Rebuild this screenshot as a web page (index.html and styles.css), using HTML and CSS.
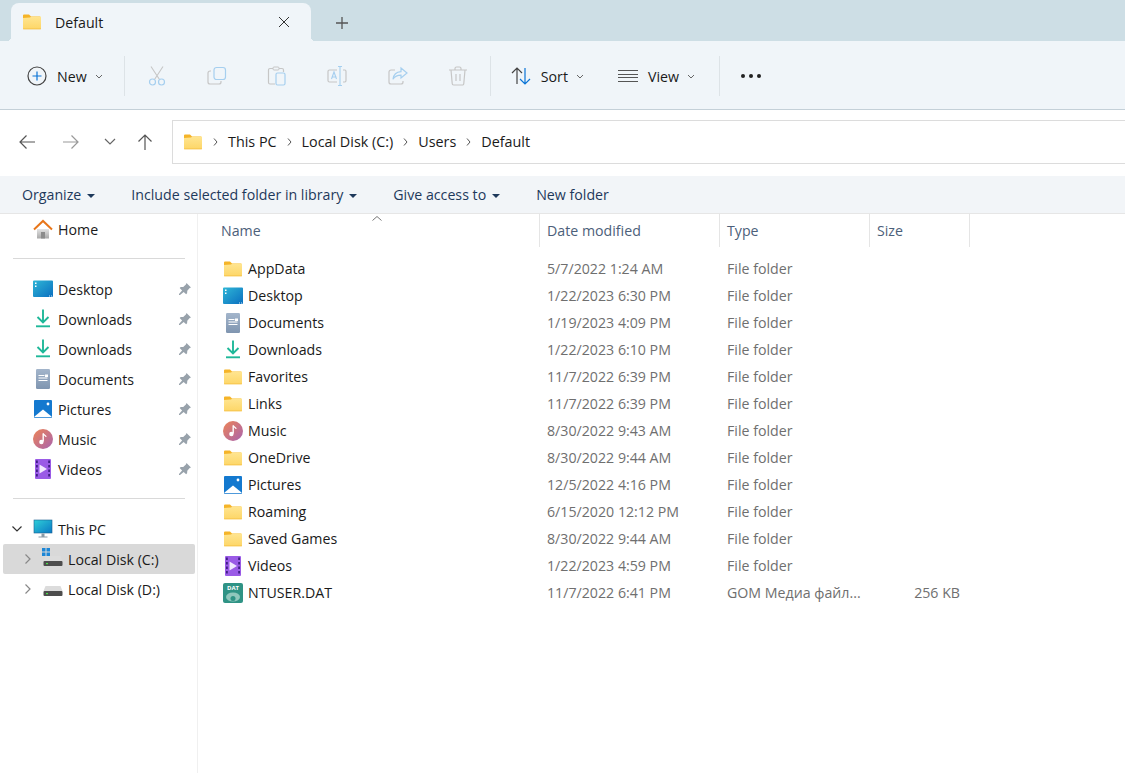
FILE: index.html
```html
<!DOCTYPE html>
<html lang="en">
<head>
    <meta charset="UTF-8">
    <meta name="viewport" content="width=device-width, initial-scale=1.0">
    <title>Default - File Explorer</title>
    <link rel="stylesheet" href="styles.css">
</head>
<body>

    <!-- icon sprites -->
    <svg class="sprites" width="0" height="0">
        <defs>
            <linearGradient id="folderFill" x1="0" y1="0" x2="0" y2="1">
                <stop offset="0" stop-color="#ffe591"/>
                <stop offset="1" stop-color="#fdd667"/>
            </linearGradient>
            <linearGradient id="deskFill" x1="0" y1="0" x2="1" y2="1">
                <stop offset="0" stop-color="#2fb6d6"/>
                <stop offset="1" stop-color="#0a6fc0"/>
            </linearGradient>
            <linearGradient id="docFill" x1="0" y1="0" x2="0" y2="1">
                <stop offset="0" stop-color="#a3b5cb"/>
                <stop offset="1" stop-color="#7f95b0"/>
            </linearGradient>
            <linearGradient id="musicFill" x1="0" y1="0" x2="1" y2="1">
                <stop offset="0" stop-color="#ee8455"/>
                <stop offset="1" stop-color="#a864b0"/>
            </linearGradient>
            <linearGradient id="homeFill" x1="0" y1="0" x2="0" y2="1">
                <stop offset="0" stop-color="#e4e4e4"/>
                <stop offset="1" stop-color="#a8a8a8"/>
            </linearGradient>
            <linearGradient id="pcFill" x1="0" y1="0" x2="1" y2="1">
                <stop offset="0" stop-color="#2fcfd8"/>
                <stop offset="1" stop-color="#0a78c4"/>
            </linearGradient>
            <symbol id="folder" viewBox="0 0 20 20">
                <path d="M1 3.500a1 1 0 0 1 1-1h5l2 2h9v3H1z" fill="#f5b428"/>
                <path d="M1 6l7-.5 1.500-1H19v12a.7.7 0 0 1-.7.7H1.700a.7.7 0 0 1-.7-.7z" fill="url(#folderFill)"/>
                <path d="M1 16.600h18v.6H1z" fill="#f2b93a"/>
            </symbol>
            <symbol id="desktop" viewBox="0 0 20 20">
                <path d="M0 2.500a1 1 0 0 1 1-1h18a1 1 0 0 1 1 1V17a1 1 0 0 1-1 1H1a1 1 0 0 1-1-1z" fill="url(#deskFill)"/>
                <path d="M2 3.500h1.500V5H2zM2 6.500h1.500V8H2z" fill="#fff"/>
                <path d="M16 16.500h1v1h-1zM18 16.500h1v1h-1z" fill="#cfe8f5"/>
            </symbol>
            <symbol id="download" viewBox="0 0 20 20">
                <path d="M10 .5v13M4.500 8L10 13.500 15.500 8" fill="none" stroke="#1fb899" stroke-width="1.900"/>
                <path d="M3 17.300h14" stroke="#1fb899" stroke-width="1.900"/>
            </symbol>
            <symbol id="documents" viewBox="0 0 20 20">
                <rect x="3" y="0" width="14" height="20" rx="1.200" fill="url(#docFill)"/>
                <path d="M5.500 6.500h6M5.500 9h9M5.500 11.500h9" stroke="#fff" stroke-width="1"/>
                <rect x="12" y="5.500" width="3" height="2.500" fill="#fff"/>
            </symbol>
            <symbol id="pictures" viewBox="0 0 20 20">
                <rect x="1" y="1" width="18" height="18" rx="1" fill="#1479cf"/>
                <path d="M1.500 17.500L10 10.500l8.500 7v.8h-17z" fill="#fff"/>
                <circle cx="15" cy="5" r="1.400" fill="#fff"/>
            </symbol>
            <symbol id="music" viewBox="0 0 20 20">
                <circle cx="10" cy="10" r="10" fill="url(#musicFill)"/>
                <path d="M10.200 4.500v8" stroke="#fff" stroke-width="1.400"/>
                <circle cx="8.400" cy="13" r="2.200" fill="#fff"/>
                <path d="M10.200 4.500c.5 1.800 2.500 1.800 3 3.400" fill="none" stroke="#fff" stroke-width="1.200"/>
            </symbol>
            <symbol id="videos" viewBox="0 0 20 20">
                <rect x="2" y="0" width="16" height="20" rx="1" fill="#9a5be6"/>
                <path d="M6.500 5.500v9l7.500-4.500z" fill="#f1e8ff"/>
                <path d="M3 1.500h1.800v2.400H3zM3 6h1.800v2.400H3zM3 10.500h1.800v2.400H3zM3 15h1.800v2.400H3zM15.200 1.500H17v2.400h-1.800zM15.200 6H17v2.400h-1.800zM15.200 10.500H17v2.400h-1.800zM15.200 15H17v2.400h-1.800z" fill="#3f1f85"/>
            </symbol>
            <symbol id="pin" viewBox="0 0 14 14">
                <path d="M8.500 1l4.500 4.500-1.300.6-2.400 2.700-.2 2.500-1 1-2.400-2.400L2 13l-1 0 0-1 3.100-3.500L1.700 6.100l1-1 2.500-.2 2.700-2.400z" fill="#98a2ab"/>
            </symbol>
            <symbol id="disk" viewBox="0 0 20 20">
                <path d="M2.500 7h15l2 5H.5z" fill="#dcdcdc"/>
                <rect x="0.500" y="12" width="19" height="5" rx="1" fill="#4d4d4d"/>
                <rect x="3" y="14" width="2" height="1.200" fill="#4be04b"/>
            </symbol>
        </defs>
    </svg>

    <div class="tab-strip">
        <div class="tab">
            <svg class="ico"><use href="#folder"/></svg>
            <span class="tab-title">Default</span>
            <svg class="tab-close" viewBox="0 0 12 12"><path d="M1 1l10 10M11 1L1 11" stroke="#333" fill="none"/></svg>
        </div>
        <svg class="tab-add" viewBox="0 0 12 12"><path d="M6 0v12M0 6h12" stroke="#555" stroke-width="1.300" fill="none"/></svg>
    </div>

    <div class="toolbar">
        <div class="tool tool-new">
            <svg class="tool-ico" viewBox="0 0 20 20">
                <circle cx="10" cy="10" r="9" fill="none" stroke="#444" stroke-width="1.200"/>
                <path d="M10 5.500v9M5.500 10h9" stroke="#0a74d6" stroke-width="1.200"/>
            </svg>
            <span>New</span>
            <svg class="chev" viewBox="0 0 8 5"><path d="M1 1l3 3 3-3" fill="none" stroke="#666"/></svg>
        </div>
        <div class="tool-sep sep-a"></div>
        <div class="tool-icon">
            <svg class="tool-ico" viewBox="0 0 20 20">
                <path d="M4 .5l8.500 13M16 .5L7.500 13.500" fill="none" stroke="#c6c6c6" stroke-width="1.100"/>
                <circle cx="5.500" cy="16" r="3" fill="none" stroke="#a6cfef" stroke-width="1.200"/>
                <circle cx="14.500" cy="16" r="3" fill="none" stroke="#a6cfef" stroke-width="1.200"/>
            </svg>
        </div>
        <div class="tool-icon">
            <svg class="tool-ico" viewBox="0 0 20 20">
                <path d="M4 5H3a2 2 0 0 0-2 2v9a2 2 0 0 0 2 2h9a2 2 0 0 0 2-2v-1" fill="none" stroke="#c6c6c6" stroke-width="1.200"/>
                <rect x="7" y="1.500" width="11.500" height="12" rx="2.500" fill="none" stroke="#a6cfef" stroke-width="1.200"/>
            </svg>
        </div>
        <div class="tool-icon">
            <svg class="tool-ico" viewBox="0 0 20 20">
                <path d="M8 18H3a1.500 1.500 0 0 1-1.500-1.500V4A1.500 1.500 0 0 1 3 2.500h12A1.500 1.500 0 0 1 16.500 4v2" fill="none" stroke="#c6c6c6" stroke-width="1.200"/>
                <rect x="6" y="1" width="6" height="3" rx="1" fill="#f0f5f9" stroke="#c6c6c6"/>
                <rect x="9" y="7" width="9" height="12" rx="1.500" fill="none" stroke="#a6cfef" stroke-width="1.200"/>
            </svg>
        </div>
        <div class="tool-icon">
            <svg class="tool-ico" viewBox="0 0 20 20">
                <path d="M10 4H2.500A1.500 1.500 0 0 0 1 5.500v9A1.500 1.500 0 0 0 2.500 16H10M16 4h2a1.500 1.500 0 0 1 1 1.500v9a1.500 1.500 0 0 1-1 1.500h-2" fill="none" stroke="#c6c6c6" stroke-width="1.200"/>
                <path d="M4.500 13l2.500-7 2.500 7M5.500 11h4M13 .5v19M11 .5h4M11 19.500h4" fill="none" stroke="#a6cfef" stroke-width="1.100"/>
            </svg>
        </div>
        <div class="tool-icon">
            <svg class="tool-ico" viewBox="0 0 20 20">
                <path d="M7 4H3a2 2 0 0 0-2 2v10a2 2 0 0 0 2 2h10a2 2 0 0 0 2-2v-1" fill="none" stroke="#c6c6c6" stroke-width="1.200"/>
                <path d="M13 2l6 5-6 5V9.200c-3 0-6 1-8 4 .5-4 3.500-7.200 8-7.500z" fill="none" stroke="#a6cfef" stroke-width="1.200"/>
            </svg>
        </div>
        <div class="tool-icon">
            <svg class="tool-ico" viewBox="0 0 20 20">
                <path d="M1 4h18M7 4V2.500A1.500 1.500 0 0 1 8.500 1h3A1.500 1.500 0 0 1 13 2.500V4M3 4l1.200 13.500A1.500 1.500 0 0 0 5.700 19h8.600a1.500 1.500 0 0 0 1.500-1.500L17 4M8 8v7M12 8v7" fill="none" stroke="#c6c6c6" stroke-width="1.200"/>
            </svg>
        </div>
        <div class="tool-sep sep-b"></div>
        <div class="tool tool-sort">
            <svg class="tool-ico" viewBox="0 0 20 20">
                <path d="M6 18V2M1 7l5-5 5 5" fill="none" stroke="#444" stroke-width="1.200"/>
                <path d="M14 2v16M9 13l5 5 5-5" fill="none" stroke="#0a74d6" stroke-width="1.200"/>
            </svg>
            <span>Sort</span>
            <svg class="chev" viewBox="0 0 8 5"><path d="M1 1l3 3 3-3" fill="none" stroke="#666"/></svg>
        </div>
        <div class="tool tool-view">
            <svg class="tool-ico" viewBox="0 0 20 20">
                <path d="M0 4.500h20M0 8.500h20M0 11.500h20M0 15.500h20" stroke="#555" stroke-width="1.200"/>
            </svg>
            <span>View</span>
            <svg class="chev" viewBox="0 0 8 5"><path d="M1 1l3 3 3-3" fill="none" stroke="#666"/></svg>
        </div>
        <div class="tool-sep sep-c"></div>
        <div class="more"><i></i><i></i><i></i></div>
    </div>

    <div class="address-row">
        <div class="nav-buttons">
            <svg class="nav-ico" viewBox="0 0 16 16"><path d="M16 8H1M7.500 1.500L1 8l6.500 6.500" fill="none" stroke="#555" stroke-width="1.200"/></svg>
            <svg class="nav-ico nav-off" viewBox="0 0 16 16"><path d="M0 8h15M8.500 1.500L15 8l-6.500 6.500" fill="none" stroke="#999" stroke-width="1.200"/></svg>
            <svg class="nav-chev" viewBox="0 0 12 7"><path d="M1 1l5 5 5-5" fill="none" stroke="#666" stroke-width="1.200"/></svg>
            <svg class="nav-ico" viewBox="0 0 16 16"><path d="M8 16V1M1.500 7.500L8 1l6.500 6.500" fill="none" stroke="#555" stroke-width="1.200"/></svg>
        </div>
        <div class="address-box">
            <svg class="ico crumb-folder"><use href="#folder"/></svg>
            <svg class="crumb-sep" viewBox="0 0 5 8"><path d="M1 .5L4 4 1 7.500" fill="none" stroke="#555"/></svg>
            <span>This PC</span>
            <svg class="crumb-sep" viewBox="0 0 5 8"><path d="M1 .5L4 4 1 7.500" fill="none" stroke="#555"/></svg>
            <span>Local Disk (C:)</span>
            <svg class="crumb-sep" viewBox="0 0 5 8"><path d="M1 .5L4 4 1 7.500" fill="none" stroke="#555"/></svg>
            <span>Users</span>
            <svg class="crumb-sep" viewBox="0 0 5 8"><path d="M1 .5L4 4 1 7.500" fill="none" stroke="#555"/></svg>
            <span>Default</span>
        </div>
    </div>

    <div class="command-bar">
        <span class="cmd cmd-arrow">Organize</span>
        <span class="cmd cmd-arrow">Include selected folder in library</span>
        <span class="cmd cmd-arrow">Give access to</span>
        <span class="cmd">New folder</span>
    </div>

    <div class="content">
        <nav class="sidebar">
            <div class="side-item">
                <svg class="ico" viewBox="0 0 20 20">
                    <path d="M4 10h12v9.500H4z" fill="url(#homeFill)"/>
                    <path d="M8 13h4v6.500H8z" fill="#8c8c8c"/>
                    <path d="M1 10.500L10 2l9 8.500" fill="none" stroke="#e8761a" stroke-width="2"/>
                </svg>
                <span>Home</span>
            </div>
            <hr class="side-line">
            <div class="side-item"><svg class="ico"><use href="#desktop"/></svg><span>Desktop</span><svg class="pin"><use href="#pin"/></svg></div>
            <div class="side-item"><svg class="ico"><use href="#download"/></svg><span>Downloads</span><svg class="pin"><use href="#pin"/></svg></div>
            <div class="side-item"><svg class="ico"><use href="#download"/></svg><span>Downloads</span><svg class="pin"><use href="#pin"/></svg></div>
            <div class="side-item"><svg class="ico"><use href="#documents"/></svg><span>Documents</span><svg class="pin"><use href="#pin"/></svg></div>
            <div class="side-item"><svg class="ico"><use href="#pictures"/></svg><span>Pictures</span><svg class="pin"><use href="#pin"/></svg></div>
            <div class="side-item"><svg class="ico"><use href="#music"/></svg><span>Music</span><svg class="pin"><use href="#pin"/></svg></div>
            <div class="side-item"><svg class="ico"><use href="#videos"/></svg><span>Videos</span><svg class="pin"><use href="#pin"/></svg></div>
            <hr class="side-line">
            <div class="side-item side-pc">
                <svg class="tree-arrow" viewBox="0 0 10 6"><path d="M.5.5L5 5 9.500.5" fill="none" stroke="#333" stroke-width="1.200"/></svg>
                <svg class="ico" viewBox="0 0 20 20">
                    <rect x="1" y="1" width="18" height="13" fill="url(#pcFill)" stroke="#1a5f8f" stroke-width=".6"/>
                    <path d="M8.500 14.500h3v3h-3zM5.500 17.500h9v1h-9z" fill="#8a9aa6"/>
                </svg>
                <span>This PC</span>
            </div>
            <div class="side-item side-disk selected">
                <svg class="tree-arrow side-arrow" viewBox="0 0 6 10"><path d="M.5.5L5 5 .5 9.500" fill="none" stroke="#888" stroke-width="1.200"/></svg>
                <span class="disk-wrap">
                    <svg class="ico"><use href="#disk"/></svg>
                    <svg class="win-logo" viewBox="0 0 8 8"><path d="M0 0h3.500v3.500H0zM4.500 0H8v3.500H4.500zM0 4.500h3.500V8H0zM4.500 4.500H8V8H4.500z" fill="#1c86d6"/></svg>
                </span>
                <span>Local Disk (C:)</span>
            </div>
            <div class="side-item side-disk">
                <svg class="tree-arrow side-arrow" viewBox="0 0 6 10"><path d="M.5.5L5 5 .5 9.500" fill="none" stroke="#888" stroke-width="1.200"/></svg>
                <span class="disk-wrap"><svg class="ico"><use href="#disk"/></svg></span>
                <span>Local Disk (D:)</span>
            </div>
        </nav>

        <main class="files">
            <div class="file-head">
                <span class="col-name">Name</span>
                <span class="col">Date modified</span>
                <span class="col">Type</span>
                <span class="col col-last">Size</span>
                <svg class="sort-caret" viewBox="0 0 10 5"><path d="M.5 4.500L5 .5l4.500 4" fill="none" stroke="#777"/></svg>
            </div>
            <div class="file-list">
                <div class="file-row"><span class="name"><svg class="ico"><use href="#folder"/></svg>AppData</span><span class="meta">5/7/2022 1:24 AM</span><span class="meta">File folder</span><span class="meta"></span></div>
                <div class="file-row"><span class="name"><svg class="ico"><use href="#desktop"/></svg>Desktop</span><span class="meta">1/22/2023 6:30 PM</span><span class="meta">File folder</span><span class="meta"></span></div>
                <div class="file-row"><span class="name"><svg class="ico"><use href="#documents"/></svg>Documents</span><span class="meta">1/19/2023 4:09 PM</span><span class="meta">File folder</span><span class="meta"></span></div>
                <div class="file-row"><span class="name"><svg class="ico"><use href="#download"/></svg>Downloads</span><span class="meta">1/22/2023 6:10 PM</span><span class="meta">File folder</span><span class="meta"></span></div>
                <div class="file-row"><span class="name"><svg class="ico"><use href="#folder"/></svg>Favorites</span><span class="meta">11/7/2022 6:39 PM</span><span class="meta">File folder</span><span class="meta"></span></div>
                <div class="file-row"><span class="name"><svg class="ico"><use href="#folder"/></svg>Links</span><span class="meta">11/7/2022 6:39 PM</span><span class="meta">File folder</span><span class="meta"></span></div>
                <div class="file-row"><span class="name"><svg class="ico"><use href="#music"/></svg>Music</span><span class="meta">8/30/2022 9:43 AM</span><span class="meta">File folder</span><span class="meta"></span></div>
                <div class="file-row"><span class="name"><svg class="ico"><use href="#folder"/></svg>OneDrive</span><span class="meta">8/30/2022 9:44 AM</span><span class="meta">File folder</span><span class="meta"></span></div>
                <div class="file-row"><span class="name"><svg class="ico"><use href="#pictures"/></svg>Pictures</span><span class="meta">12/5/2022 4:16 PM</span><span class="meta">File folder</span><span class="meta"></span></div>
                <div class="file-row"><span class="name"><svg class="ico"><use href="#folder"/></svg>Roaming</span><span class="meta">6/15/2020 12:12 PM</span><span class="meta">File folder</span><span class="meta"></span></div>
                <div class="file-row"><span class="name"><svg class="ico"><use href="#folder"/></svg>Saved Games</span><span class="meta">8/30/2022 9:44 AM</span><span class="meta">File folder</span><span class="meta"></span></div>
                <div class="file-row"><span class="name"><svg class="ico"><use href="#videos"/></svg>Videos</span><span class="meta">1/22/2023 4:59 PM</span><span class="meta">File folder</span><span class="meta"></span></div>
                <div class="file-row">
                    <span class="name">
                        <svg class="ico" viewBox="0 0 20 20">
                            <rect x="0" y="0" width="20" height="20" rx="2" fill="#2f9385"/>
                            <text x="10" y="6.500" text-anchor="middle" class="dat-label">DAT</text>
                            <ellipse cx="10" cy="14" rx="7" ry="4.500" fill="#8fc7bc"/>
                            <circle cx="10" cy="15.500" r="2.500" fill="#2f9385"/>
                        </svg>
                        NTUSER.DAT
                    </span>
                    <span class="meta">11/7/2022 6:41 PM</span>
                    <span class="meta">GOM Медиа файл...</span>
                    <span class="meta meta-size">256 KB</span>
                </div>
            </div>
        </main>
    </div>

</body>
</html>
```
FILE: styles.css
```css
html, body {
    height: 100%;
}

body {
    margin: 0;
    font-family: "Open Sans", "Noto Sans", sans-serif;
    font-size: 14.2px;
    color: #1a1a1a;
    background: #fff;
    overflow: hidden;
}

.sprites {
    display: block;
    position: absolute;
}

.ico {
    width: 20px;
    height: 20px;
    flex: none;
}

.dat-label {
    font-size: 6px;
    font-weight: 700;
    fill: #fff;
}

/* tab strip */
.tab-strip {
    height: 41px;
    background: #cddee5;
    display: flex;
    align-items: flex-end;
    padding-left: 11px;
}

.tab {
    width: 300px;
    height: 38px;
    box-sizing: border-box;
    background: #f0f5f9;
    border-radius: 8px 8px 0 0;
    display: flex;
    align-items: center;
    padding: 0 21px 0 11px;
    position: relative;
}

/* little flares at the foot of the tab */
.tab::before,
.tab::after {
    content: "";
    position: absolute;
    bottom: 0;
    width: 4px;
    height: 4px;
}

.tab::before {
    left: -4px;
    background: radial-gradient(circle at 0 0, transparent 4px, #f0f5f9 4px);
}

.tab::after {
    right: -4px;
    background: radial-gradient(circle at 100% 0, transparent 4px, #f0f5f9 4px);
}

.tab-title {
    margin-left: 13px;
    flex: 1;
}

.tab-close {
    width: 12px;
    height: 12px;
}

.tab-add {
    width: 12px;
    height: 12px;
    margin: 0 0 12px 25px;
}

/* toolbar */
.toolbar {
    height: 66px;
    padding-top: 2px;
    background: #f0f5f9;
    border-bottom: 1px solid #c4d0d8;
    display: flex;
    align-items: center;
    padding-left: 27px;
}

.tool {
    display: flex;
    align-items: center;
}

.tool-ico {
    width: 20px;
    height: 20px;
    flex: none;
}

.tool span {
    margin-left: 10px;
}

.chev {
    width: 8px;
    height: 5px;
    margin-left: 8px;
}

.tool-sep {
    width: 1px;
    height: 40px;
    background: #dde3e7;
}

.sep-a {
    margin-left: 21px;
    margin-right: 2px;
}

.tool-icon {
    width: 60.2px;
    display: flex;
    justify-content: center;
}

.sep-b {
    margin-left: 2px;
    margin-right: 20px;
}

.tool-view {
    margin-left: 34px;
}

.sep-c {
    margin-left: 24px;
}

.more {
    display: flex;
    gap: 4px;
    margin-left: 21px;
}

.more i {
    width: 4px;
    height: 4px;
    border-radius: 50%;
    background: #222;
}

/* address row */
.address-row {
    height: 63px;
    padding-bottom: 3px;
    background: #fff;
    display: flex;
    align-items: center;
    padding-left: 19px;
}

.nav-buttons {
    width: 153px;
    display: flex;
    align-items: center;
}

.nav-ico {
    width: 16px;
    height: 16px;
}

.nav-off {
    margin-left: 28px;
}

.nav-chev {
    width: 12px;
    height: 7px;
    margin: 0 21px 0 25px;
}

.address-box {
    flex: 1;
    height: 44px;
    box-sizing: border-box;
    border: 1px solid #dcdcdc;
    border-right: none;
    display: flex;
    align-items: center;
    padding-left: 10px;
    font-size: 14.35px;
}

.crumb-sep {
    width: 5px;
    height: 8px;
    margin: 0 10px;
}

/* command bar */
.command-bar {
    height: 37px;
    background: #f2f5f8;
    border-bottom: 1px solid #e6e6e6;
    display: flex;
    align-items: center;
    padding-left: 22px;
    gap: 36px;
    color: #1e395b;
}

.cmd-arrow::after {
    content: "";
    display: inline-block;
    border: 4px solid transparent;
    border-top: 4px solid #1e395b;
    border-bottom: none;
    margin-left: 6px;
    vertical-align: 2px;
}

/* sidebar and files */
.content {
    display: flex;
    height: 559px;
}

.sidebar {
    width: 197px;
    flex: none;
    border-right: 1px solid #f0f0f0;
}

.side-item {
    height: 30px;
    display: flex;
    align-items: center;
    padding-left: 33px;
    gap: 5px;
    position: relative;
}

.pin {
    position: absolute;
    left: 178px;
    top: 8px;
    width: 14px;
    height: 14px;
}

.side-line {
    border: none;
    border-top: 1px solid #d9d9d9;
    margin: 14px 12px 15px 13px;
}

.side-pc {
    padding-left: 12px;
}

.side-pc .ico {
    margin-left: 5px;
}

.tree-arrow {
    width: 10px;
    height: 6px;
    margin-right: 1px;
}

.side-disk {
    margin: 0 2px 0 3px;
    padding-left: 22px;
    border-radius: 2px;
}

.selected {
    background: #d9d9d9;
}

.side-arrow {
    width: 6px;
    height: 10px;
    margin-right: 7px;
}

.disk-wrap {
    position: relative;
    display: flex;
}

.win-logo {
    position: absolute;
    left: -1px;
    top: -1px;
    width: 8px;
    height: 8px;
}

.files {
    flex: 1;
}

.file-head {
    display: grid;
    grid-template-columns: 341px 180px 150px 101px;
    height: 33px;
    color: #4c607a;
    position: relative;
}

.file-head span {
    display: flex;
    align-items: center;
}

.col-name {
    padding-left: 23px;
}

.col {
    border-left: 1px solid #e5e5e5;
    padding-left: 7px;
}

.col-last {
    border-right: 1px solid #e5e5e5;
}

.sort-caret {
    position: absolute;
    left: 174px;
    top: 2px;
    width: 10px;
    height: 5px;
}

.file-list {
    padding-top: 8px;
}

.file-row {
    display: grid;
    grid-template-columns: 341px 180px 150px 100px;
    height: 27px;
    align-items: center;
}

.name {
    display: flex;
    align-items: center;
    gap: 5px;
    padding-left: 25px;
}

.meta {
    padding-left: 8px;
    color: #6f6f6f;
}

.meta-size {
    text-align: right;
    padding-right: 9px;
}
```
